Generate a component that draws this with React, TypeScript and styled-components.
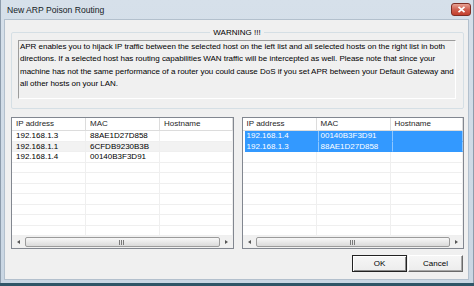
import React from "react";
import styled, { createGlobalStyle } from "styled-components";

const UI_FONT = `"Liberation Sans", Arial, sans-serif`;

const GlobalStyle = createGlobalStyle`
  html, body { margin: 0; padding: 0; }
  body { background: #2f5567; font-family: ${UI_FONT}; }
  * { box-sizing: border-box; }
`;

const Window = styled.div`
  width: 474px;
  height: 283px;
  display: flex;
  flex-direction: column;
  background: linear-gradient(#d6e0ea, #c9d6e3);
  border-left: 1px solid #8d9cac;
  border-right: 1px solid #8d9cac;
  padding: 0 4px 3px 3px;
`;

const TitleBar = styled.div`
  height: 19px;
  display: flex;
  align-items: center;
  justify-content: space-between;
  padding-left: 3px;
`;

const Title = styled.span`
  font-size: 8.6px;
  color: #151c26;
`;

const CloseButton = styled.div`
  width: 20px;
  height: 13px;
  margin-right: -2px;
  border: 1px solid #7e2d24;
  border-radius: 3px;
  background: linear-gradient(#e7a294, #d06050 50%, #c33e2c);
  display: flex;
  align-items: center;
  justify-content: center;
`;

const Client = styled.div`
  flex: 1;
  display: flex;
  flex-direction: column;
  background: #f0f0f0;
  border: 1px solid #b3c0cd;
  padding: 7px 4px 0 6px;
`;

const GroupBox = styled.fieldset`
  margin: 0;
  padding: 2px 7px 9px 6px;
  border: 1px solid #d5dfe5;
  border-radius: 2px;
  min-width: 0;
`;

const GroupTitle = styled.legend`
  margin: 0 auto;
  padding: 0 3px;
  font-size: 8px;
  line-height: 11px;
  color: #000;
`;

const WarningText = styled.div`
  height: 59px;
  border-top: 1px solid #9c9c9c;
  border-left: 1px solid #9c9c9c;
  border-right: 1px solid #ffffff;
  border-bottom: 1px solid #ffffff;
  background: #f0f0f0;
  padding: 0 0 0 1px;
  font-size: 8px;
  letter-spacing: -0.03px;
  line-height: 12.3px;
  color: #000;
  white-space: nowrap;
  overflow: hidden;
`;

const Lists = styled.div`
  display: flex;
  gap: 8px;
  margin-top: 8px;
`;

const ListPanel = styled.div`
  flex: 1;
  height: 132px;
  border: 1px solid #828790;
  background: #fff;
  display: flex;
  flex-direction: column;
`;

const HeaderRow = styled.div`
  display: grid;
  grid-template-columns: 74px 74px 1fr;
  height: 13px;
  border-bottom: 1px solid #dcdcdc;
`;

const HeaderCell = styled.div`
  padding-left: 4px;
  border-right: 1px solid #dcdcdc;
  font-size: 8px;
  line-height: 12px;
  color: #1e1e1e;
  white-space: nowrap;
  overflow: hidden;
`;

const Rows = styled.div`
  flex: 1;
  display: flex;
  flex-direction: column;
`;

type RowKind = "normal" | "shaded" | "selected";

const Row = styled.div<{ $kind: RowKind }>`
  display: grid;
  grid-template-columns: 74px 74px 1fr;
  height: 10.5px;
  margin-left: ${(p) => (p.$kind === "selected" ? "2px" : "0")};
  background: ${(p) =>
    p.$kind === "selected" ? "#3399ff" : p.$kind === "shaded" ? "#f2f2f2" : "#fff"};
  color: ${(p) => (p.$kind === "selected" ? "#fff" : "#000")};
`;

const Cell = styled.div<{ $kind: RowKind }>`
  padding-left: ${(p) => (p.$kind === "selected" ? "2px" : "4px")};
  border-right: 1px solid
    ${(p) => (p.$kind === "selected" ? "rgba(255,255,255,0.45)" : "#efefef")};
  border-bottom: 1px solid ${(p) => (p.$kind === "selected" ? "transparent" : "#efefef")};
  font-size: 8px;
  line-height: 10px;
  white-space: nowrap;
  overflow: hidden;
`;

const ScrollBar = styled.div`
  height: 12px;
  display: flex;
  align-items: center;
  background: #f0f0f0;
`;

const ArrowButton = styled.div`
  width: 13px;
  height: 12px;
  display: flex;
  align-items: center;
  justify-content: center;
`;

const Arrow = styled.span<{ $dir: "left" | "right" }>`
  width: 0;
  height: 0;
  border-top: 2.5px solid transparent;
  border-bottom: 2.5px solid transparent;
  ${(p) =>
    p.$dir === "left" ? "border-right: 3px solid #555;" : "border-left: 3px solid #555;"}
`;

const Thumb = styled.div`
  flex: 1;
  height: 10px;
  border: 1px solid #9b9b9b;
  border-radius: 2px;
  background: linear-gradient(#f7f7f7, #e9e9e9 50%, #dadada);
  display: flex;
  align-items: center;
  justify-content: center;
`;

const Grip = styled.span`
  width: 6px;
  height: 5px;
  background: repeating-linear-gradient(90deg, #7a7a7a 0 1px, transparent 1px 2px);
`;

const ButtonRow = styled.div`
  display: flex;
  justify-content: flex-end;
  gap: 1px;
  margin-top: 6px;
  padding-right: 1px;
`;

const DialogButton = styled.button<{ $default?: boolean }>`
  width: 55px;
  height: 17px;
  padding: 0;
  font-family: ${UI_FONT};
  font-size: 8px;
  color: #000;
  background: linear-gradient(#f6f6f6, #ececec);
  border-style: solid;
  border-width: 1px;
  border-color: ${(p) => (p.$default ? "#222" : "#fff #6a6a6a #6a6a6a #fff")};
  box-shadow: ${(p) =>
    p.$default
      ? "inset 1px 1px 0 #fff, inset -1px -1px 0 #8a8a8a"
      : "inset -1px -1px 0 #a8a8a8"};
`;

type Host = { ip: string; mac: string; host: string; kind: RowKind };

const leftHosts: Host[] = [
  { ip: "192.168.1.3", mac: "88AE1D27D858", host: "", kind: "normal" },
  { ip: "192.168.1.1", mac: "6CFDB9230B3B", host: "", kind: "shaded" },
  { ip: "192.168.1.4", mac: "00140B3F3D91", host: "", kind: "normal" },
];

const rightHosts: Host[] = [
  { ip: "192.168.1.4", mac: "00140B3F3D91", host: "", kind: "selected" },
  { ip: "192.168.1.3", mac: "88AE1D27D858", host: "", kind: "selected" },
];

const ROWS = 10;

function HostList({ hosts }: { hosts: Host[] }) {
  const filled: Host[] = [...hosts];
  while (filled.length < ROWS) filled.push({ ip: "", mac: "", host: "", kind: "normal" });
  return (
    <ListPanel>
      <HeaderRow>
        <HeaderCell>IP address</HeaderCell>
        <HeaderCell>MAC</HeaderCell>
        <HeaderCell>Hostname</HeaderCell>
      </HeaderRow>
      <Rows>
        {filled.map((h, i) => (
          <Row key={i} $kind={h.kind}>
            <Cell $kind={h.kind}>{h.ip}</Cell>
            <Cell $kind={h.kind}>{h.mac}</Cell>
            <Cell $kind={h.kind}>{h.host}</Cell>
          </Row>
        ))}
      </Rows>
      <ScrollBar>
        <ArrowButton>
          <Arrow $dir="left" />
        </ArrowButton>
        <Thumb>
          <Grip />
        </Thumb>
        <ArrowButton>
          <Arrow $dir="right" />
        </ArrowButton>
      </ScrollBar>
    </ListPanel>
  );
}

export default function App() {
  return (
    <>
      <GlobalStyle />
      <Window>
        <TitleBar>
          <Title>New ARP Poison Routing</Title>
          <CloseButton>
            <svg width="9" height="7" viewBox="0 0 9 7">
              <path d="M1.5 0.8 L7.5 6.2 M7.5 0.8 L1.5 6.2" stroke="#fff" strokeWidth="1.7" />
            </svg>
          </CloseButton>
        </TitleBar>
        <Client>
          <GroupBox>
            <GroupTitle>WARNING !!!</GroupTitle>
            <WarningText>
              APR enables you to hijack IP traffic between the selected host on the left list and all selected hosts on the right list in both
              <br />
              directions. If a selected host has routing capabilities WAN traffic will be intercepted as well. Please note that since your
              <br />
              machine has not the same performance of a router you could cause DoS if you set APR between your Default Gateway and
              <br />
              all other hosts on your LAN.
            </WarningText>
          </GroupBox>
          <Lists>
            <HostList hosts={leftHosts} />
            <HostList hosts={rightHosts} />
          </Lists>
          <ButtonRow>
            <DialogButton $default>OK</DialogButton>
            <DialogButton>Cancel</DialogButton>
          </ButtonRow>
        </Client>
      </Window>
    </>
  );
}
